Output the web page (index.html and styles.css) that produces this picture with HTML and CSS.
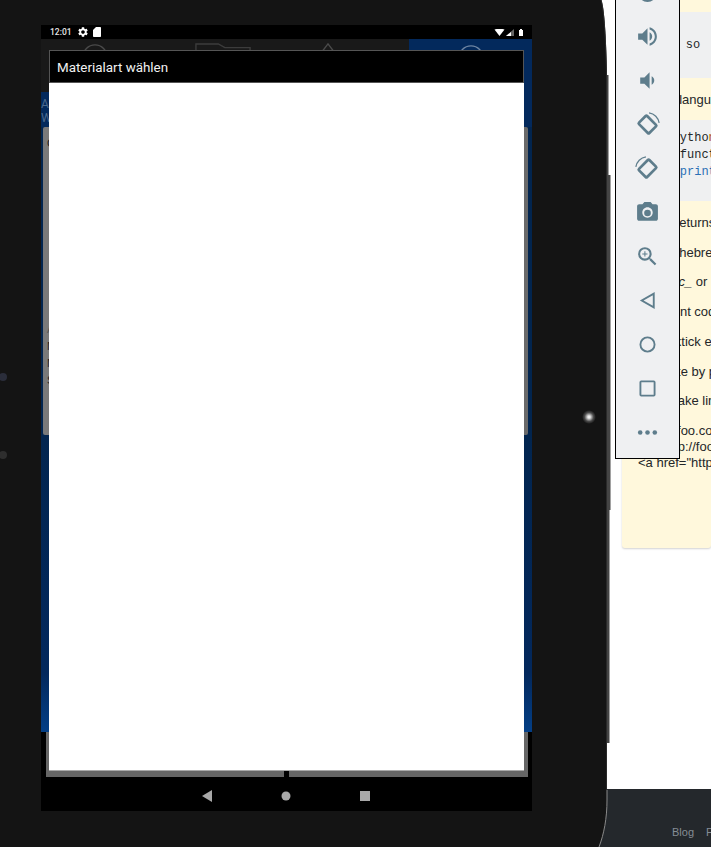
FILE: index.html
```html
<!DOCTYPE html>
<html lang="de">
<head>
<meta charset="utf-8">
<title>Emulator</title>
<link rel="stylesheet" href="styles.css">
</head>
<body>
<div class="page">
  <main class="doc">
    <pre class="code code-one">    so</pre>
    <p class="lang">Define language</p>
    <pre class="code code-two">```pytho<span class="orange">n</span>
def function
    <span class="blue">print</span></pre>
    <p>Force returns</p>
    <p>Text in hebrew</p>
    <p>in <em>_italic_</em> or</p>
    <p>To indent code</p>
    <p>At backtick escape</p>
    <p>To quote by putting</p>
    <p>Also make links</p>
    <p class="links">https://foo.com<br>[so](http://foo.com)<br>&lt;a href="http://foo.com"&gt;foo&lt;/a&gt;</p>
  </main>
  <footer class="footer"><span>Blog</span><span>FAQ</span></footer>
</div>

<svg class="bezel" viewBox="0 0 711 847" aria-hidden="true">
  <path class="button" d="M606 75H608.5V175H610.5V510H609.5V743H606Z"/>
  <path class="shell" d="M0 0H601.5C604 8 606 30 607 75V800C607 818 604 834 599 847H0Z"/>
  <path class="rim" d="M601 0C603.500 8 605.500 30 606.500 75V790"/>
  <path class="edge" d="M607 790V800C607 818 604 834 599 847"/>
</svg>
<div class="glow"></div>
<div class="dot dot-blue"></div>
<div class="dot dot-gray"></div>

<div class="screen">
  <div class="status">
    <span class="time">12:01</span>
    <svg class="st gear" viewBox="0 0 24 24"><path d="M19.140 12.940c.04-.3.06-.61.06-.94 0-.32-.02-.64-.07-.94l2.030-1.580a.49.49 0 0 0 .12-.61l-1.920-3.320a.488.488 0 0 0-.59-.22l-2.390.96c-.5-.38-1.030-.7-1.620-.94l-.36-2.540a.484.484 0 0 0-.48-.41h-3.840c-.24 0-.43.17-.47.41l-.36 2.540c-.59.24-1.130.57-1.620.94l-2.390-.96c-.22-.08-.47 0-.59.22L2.740 8.870c-.12.21-.08.47.12.61l2.030 1.580c-.05.3-.09.63-.09.94s.02.64.07.94l-2.030 1.580a.49.49 0 0 0-.12.61l1.920 3.320c.12.22.37.29.59.22l2.390-.96c.5.38 1.030.7 1.620.94l.36 2.540c.05.24.24.41.48.41h3.840c.24 0 .44-.17.47-.41l.36-2.540c.59-.24 1.130-.56 1.620-.94l2.390.96c.22.08.47 0 .59-.22l1.920-3.320c.12-.22.07-.47-.12-.61l-2.010-1.580zM12 15.600c-1.980 0-3.600-1.620-3.600-3.600s1.620-3.600 3.600-3.600 3.600 1.620 3.600 3.600-1.620 3.600-3.600 3.600z"/></svg>
    <svg class="st sd" viewBox="0 0 24 24"><path d="M18 2h-8L4 8v12c0 1.100.9 2 2 2h12c1.100 0 2-.9 2-2V4c0-1.100-.9-2-2-2z"/></svg>
    <span class="spacer"></span>
    <svg class="wifi" viewBox="0 0 10 7"><path d="M0 0.500Q5-1 10 .5L5 7z"/></svg>
    <svg class="signal" viewBox="0 0 8 7"><path class="dim" d="M8 0V7H0z"/><path d="M5 3V7H0z"/></svg>
    <svg class="battery" viewBox="0 0 4 7"><path d="M1 0H3V1H4V7H0V1H1z"/></svg>
  </div>

  <div class="tabs">
    <div class="tabs-left">
      <svg class="tab-ic" viewBox="0 0 30 30"><circle cx="15" cy="15" r="13"/></svg>
      <svg class="tab-ic folder" viewBox="0 0 60 30"><path d="M1 30V1H25L32 5H59V30"/></svg>
      <svg class="tab-ic tag" viewBox="0 0 30 30"><path d="M2 18L15 1 28 18"/></svg>
    </div>
    <div class="tabs-right">
      <svg class="tab-ic" viewBox="0 0 30 30"><circle cx="15" cy="15" r="13"/></svg>
    </div>
  </div>

  <div class="info"><span>A</span><span>W</span></div>

  <div class="cards">
    <div class="card">
      <span class="g">G</span>
      <span class="a">A</span>
      <span>M</span>
      <span>M</span>
      <span>S</span>
    </div>
  </div>

  <div class="blue-fill"></div>

  <div class="bottom">
    <div></div>
    <div></div>
  </div>

  <div class="nav">
    <svg viewBox="0 0 10 12"><path d="M10 0V12L0 6z"/></svg>
    <svg viewBox="0 0 10 10"><circle cx="5" cy="5" r="4.500"/></svg>
    <svg viewBox="0 0 10 10"><rect width="10" height="10"/></svg>
  </div>

  <div class="dialog">
    <div class="dialog-title">Materialart wählen</div>
    <div class="dialog-body"></div>
  </div>
</div>

<div class="toolbar">
  <div class="tool"><svg viewBox="0 0 24 24"><path d="M13 3h-2v10h2V3zm4.800 2.200l-1.400 1.400A7 7 0 1 1 7.600 6.600L6.200 5.200a9 9 0 1 0 11.600 0z"/></svg></div>
  <div class="tool"><svg viewBox="0 0 24 24"><path d="M3 9v6h4l5 5V4L7 9H3zm13.500 3c0-1.770-1.020-3.290-2.500-4.030v8.050c1.480-.73 2.500-2.250 2.500-4.020zM14 3.230v2.060c2.890.86 5 3.540 5 6.710s-2.110 5.850-5 6.710v2.060c4.010-.91 7-4.490 7-8.770s-2.990-7.860-7-8.770z"/></svg></div>
  <div class="tool"><svg viewBox="0 0 24 24"><path d="M18.500 12c0-1.770-1.020-3.290-2.500-4.030v8.050c1.480-.73 2.500-2.250 2.500-4.020zM5 9v6h4l5 5V4L9 9H5z"/></svg></div>
  <div class="tool"><svg viewBox="0 0 24 24"><g class="outline"><rect x="5" y="6.500" width="14" height="11" rx="1" transform="rotate(45 12 12)"/></g><path class="thin" d="M13.500 .8A11.500 11.500 0 0 1 23.200 10.500"/></svg></div>
  <div class="tool"><svg viewBox="0 0 24 24"><g class="outline"><rect x="5" y="6.500" width="14" height="11" rx="1" transform="rotate(-45 12 12)"/></g><path class="thin" d="M10.500 .8A11.500 11.500 0 0 0 .8 10.500"/></svg></div>
  <div class="tool"><svg viewBox="0 0 24 24"><circle cx="12" cy="12.500" r="3.200"/><path d="M9 2L7.170 4H4c-1.100 0-2 .9-2 2v12c0 1.100.9 2 2 2h16c1.100 0 2-.9 2-2V6c0-1.100-.9-2-2-2h-3.170L15 2H9zm3 15c-2.760 0-5-2.240-5-5s2.240-5 5-5 5 2.240 5 5-2.240 5-5 5z"/></svg></div>
  <div class="tool"><svg viewBox="0 0 24 24"><path d="M15.500 14h-.79l-.28-.27A6.470 6.470 0 0 0 16 9.500 6.500 6.500 0 1 0 9.500 16c1.610 0 3.090-.59 4.230-1.570l.27.28v.79l5 4.990L20.490 19l-4.990-5zm-6 0C7.010 14 5 11.990 5 9.500S7.010 5 9.500 5 14 7.010 14 9.500 11.990 14 9.500 14z"/><path d="M12 10h-2v2H9v-2H7V9h2V7h1v2h2v1z"/></svg></div>
  <div class="tool"><svg viewBox="0 0 24 24"><path class="stroke" d="M18 5.500V18.500L6.500 12z"/></svg></div>
  <div class="tool"><svg viewBox="0 0 24 24"><circle class="stroke" cx="12" cy="12" r="6.800"/></svg></div>
  <div class="tool"><svg viewBox="0 0 24 24"><rect class="stroke" x="5.200" y="5.200" width="13.600" height="13.600" rx=".8"/></svg></div>
  <div class="tool"><svg viewBox="0 0 24 24"><circle cx="5" cy="12" r="2.200"/><circle cx="12" cy="12" r="2.200"/><circle cx="19" cy="12" r="2.200"/></svg></div>
</div>
</body>
</html>
```

FILE: styles.css
```css
* { box-sizing: border-box; }
html, body { margin: 0; padding: 0; }
body {
  width: 711px;
  height: 847px;
  position: relative;
  overflow: hidden;
  background: #fff;
  font-family: "Liberation Sans", Arial, sans-serif;
}

/* page behind the emulator */
.page { width: 711px; height: 847px; display: flex; flex-direction: column; }
.doc {
  margin: 0 0 241px 622px;
  height: 548px;
  padding: 12px 0 0 16px;
  background: #fff8dc;
  border-radius: 0 0 3px 3px;
  box-shadow: 0 1px 2px rgba(0,0,0,.18);
  font-size: 13px;
  color: #242729;
  white-space: nowrap;
  overflow: hidden;
}
.doc p { margin: 0 0 13px; line-height: 16.700px; }
.code {
  margin: 0 0 0 -16px;
  padding: 0 0 0 29px;
  background: #eff0f1;
  font-family: "Liberation Mono", "Courier New", monospace;
  font-size: 12px;
  line-height: 17px;
  color: #242729;
}
.code-one { height: 66px; padding-top: 25px; padding-left: 35px; }
.code-two { height: 81px; padding-top: 10px; margin-bottom: 14px; }
.doc .lang { margin: 0; height: 42px; line-height: 44px; }
.doc .links { line-height: 16px; }
.orange { color: #b75501; }
.blue { color: #2b6fb5; }

.footer {
  height: 58px;
  background: #24282c;
  display: flex;
  justify-content: flex-start;
  align-items: flex-end;
  gap: 12px;
  padding: 0 0 8px 672px;
  font-size: 11px;
  line-height: 13px;
  color: #848d95;
  white-space: nowrap;
}

/* emulator frame */
.bezel { position: absolute; left: 0; top: 0; width: 711px; height: 847px; }
.shell { fill: #141414; }
.button { fill: #444; }
.rim { fill: none; stroke: #2a2a2a; stroke-width: 1; }
.edge { fill: none; stroke: #8a8a8a; stroke-width: 1; }
.glow {
  position: absolute;
  left: 582px; top: 410px;
  width: 14px; height: 14px;
  border-radius: 50%;
  background: radial-gradient(circle, #fff 0, #d8d8d8 15%, rgba(180,180,180,.35) 45%, rgba(180,180,180,0) 70%);
}
.dot { position: absolute; width: 8px; height: 8px; border-radius: 50%; left: -1px; }
.dot-blue { top: 373px; background: #2a2d3a; }
.dot-gray { top: 451px; background: #2e2e2e; }

.screen {
  position: absolute;
  left: 41px; top: 25px;
  width: 491px; height: 786px;
  background: #000;
  display: flex;
  flex-direction: column;
  overflow: hidden;
}
.status {
  height: 14px;
  flex: none;
  display: flex;
  align-items: center;
  padding: 0 9px;
  background: #000;
}
.time { font-family: Roboto, sans-serif; font-size: 8.500px; font-weight: 500; color: #e6e6e6; width: 27px; line-height: 14px; }
.st { width: 12px; height: 12px; fill: #fff; }
.gear { margin-right: 2px; }
.spacer { flex: 1; }
.wifi { width: 11px; height: 7px; fill: #fff; }
.signal { width: 8px; height: 7px; fill: #fff; margin-left: 1px; }
.signal .dim { fill: #666; }
.battery { width: 4px; height: 7px; fill: #fff; margin-left: 5px; }

.tabs { height: 53px; flex: none; display: flex; }
.tabs-left { flex: 1; background: #191919; display: flex; position: relative; }
.tabs-right { width: 123px; background: #03295c; display: flex; justify-content: center; padding: 5px 0 0 0; }
.tab-ic { width: 28px; height: 28px; fill: none; stroke: #4a4a4a; stroke-width: 1.500; margin-top: 4px; }
.tabs-right .tab-ic { stroke: #6d84a2; margin: 0; }
.tabs-left .tab-ic:nth-child(1) { margin-left: 40px; }
.tabs-left .folder { width: 58px; margin-left: 85px; stroke: #3c3c3c; }
.tabs-left .tag { margin-left: 62px; }
.info {
  height: 35px;
  flex: none;
  background: #03295c;
  color: #4d6a8d;
  font-family: Roboto, sans-serif;
  font-size: 12px;
  line-height: 14px;
  display: flex;
  flex-direction: column;
  padding: 5px 0 0 0;
}
.cards {
  height: 308px;
  flex: none;
  padding: 0 4px 0 2px;
  background: #02254f;
}
.card {
  height: 100%;
  background: linear-gradient(90deg, #7a7a7a 1%, #6a6a6a);
  border-radius: 2px;
  color: #222;
  font-size: 11px;
  line-height: 17px;
  display: flex;
  flex-direction: column;
  padding: 8px 0 0 4px;
}
.card .g { height: 186px; }
.card .a { color: #555; }
.blue-fill { height: 297px; flex: none; background: linear-gradient(#02254f, #03285c 80%, #043f86); }
.bottom {
  height: 45px;
  flex: none;
  display: grid;
  grid-template-columns: 238px 239px;
  gap: 5px;
  padding: 0 4px 0 5px;
}
.bottom div { background: #666; }
.nav {
  height: 34px;
  flex: none;
  display: grid;
  grid-template-columns: 10px 10px 10px;
  justify-content: center;
  align-items: center;
  column-gap: 69px;
  padding: 3px 2px 0 0;
}
.nav svg { width: 10px; height: 12px; fill: #a8a8a8; }
.nav svg + svg { height: 10px; }

.dialog {
  position: absolute;
  left: 8px; top: 25px;
  width: 475px; height: 721px;
  display: flex;
  flex-direction: column;
  border-top: 1px solid #555;
  border-left: 1px solid #555;
  border-right: 1px solid #555;
}
.dialog-title {
  height: 32px;
  flex: none;
  background: #000;
  color: #f2f2f2;
  font-family: Roboto, sans-serif;
  font-size: 13.400px;
  line-height: 34px;
  padding-left: 7px;
  border-bottom: 1px solid #555;
}
.dialog-body { flex: 1; background: #fff; margin: 0 -1px; border-bottom: 1px solid #aaa; }

/* emulator side toolbar */
.toolbar {
  position: absolute;
  left: 615px; top: -31px;
  width: 65px; height: 490px;
  background: #eff0f2;
  border: 1px solid #000;
  display: flex;
  flex-direction: column;
}
.tool { height: 44px; flex: none; display: flex; align-items: center; justify-content: center; padding-right: 1px; }
.tool svg { width: 25px; height: 25px; fill: #5e7d8c; }
.outline rect { fill: none; stroke: #5e7d8c; stroke-width: 2.600; }
.thin { fill: none; stroke: #5e7d8c; stroke-width: 1.200; }
.stroke { fill: none; stroke: #5e7d8c; stroke-width: 1.800; }
```
